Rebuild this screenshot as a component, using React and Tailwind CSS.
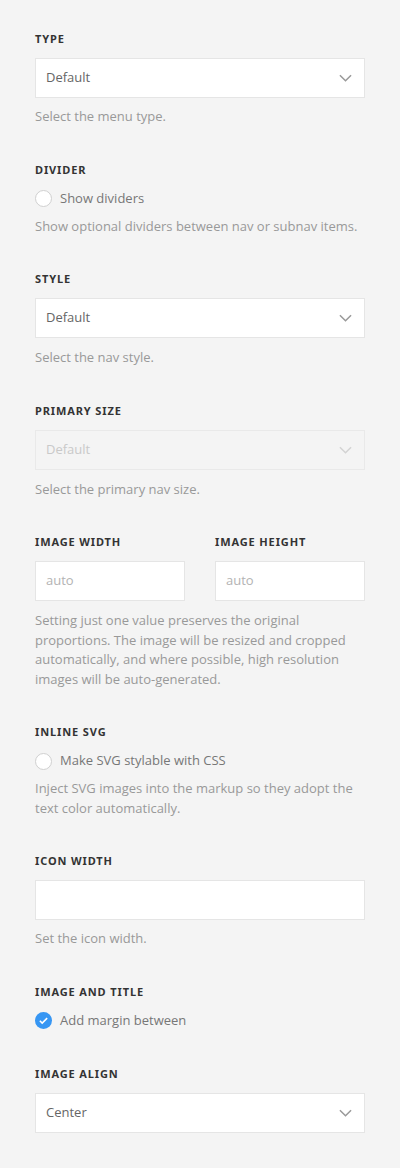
import { useState } from "react";

function Chevron({ className }) {
  return (
    <svg viewBox="0 0 14 8" className={className} fill="none">
      <path d="M1 1l6 6 6-6" stroke="currentColor" strokeWidth="1.6" />
    </svg>
  );
}

function Label({ children }) {
  return (
    <div
      className="h-5 leading-5 mb-[9px] text-[11px] font-bold uppercase tracking-[0.08em] text-[#333]"
      style={{ fontFamily: '"Noto Sans", "Open Sans", sans-serif' }}
    >
      {children}
    </div>
  );
}

function Help({ children, className = "" }) {
  return (
    <p className={`text-[13px] leading-[19.5px] text-[#999] ${className}`}>{children}</p>
  );
}

function Select({ value, disabled }) {
  return (
    <div
      className={`h-10 flex items-center justify-between pl-[10px] pr-[12px] border text-[13px] ${
        disabled
          ? "bg-[#f4f4f4] border-[#e9e9e9] text-[#c9c9c9]"
          : "bg-white border-[#e5e5e5] text-[#666]"
      }`}
    >
      <span>{value}</span>
      <Chevron className={`w-[13px] h-[8px] ${disabled ? "text-[#d3d3d3]" : "text-[#999]"}`} />
    </div>
  );
}

function TextInput({ placeholder = "" }) {
  return (
    <div className="h-10 flex items-center px-[10px] bg-white border border-[#e5e5e5] text-[13px] text-[#b3b3b3]">
      {placeholder}
    </div>
  );
}

function Radio({ label, checked }) {
  return (
    <div className="h-5 flex items-center gap-2 text-[13px] text-[#777]">
      {checked ? (
        <span className="w-[17px] h-[17px] rounded-full bg-[#3696f3] flex items-center justify-center">
          <svg viewBox="0 0 12 12" className="w-[11px] h-[11px]" fill="none">
            <path d="M2 6.2l2.6 2.6L10 3.4" stroke="white" strokeWidth="1.7" />
          </svg>
        </span>
      ) : (
        <span className="w-[17px] h-[17px] rounded-full bg-white border border-[#d0d0d0]" />
      )}
      <span>{label}</span>
    </div>
  );
}

export default function App() {
  const [marginOn] = useState(true);
  return (
    <div
      className="min-h-[1168px] bg-[#f4f4f4] px-[35px] pt-[29px] pb-10 flex flex-col gap-[33px]"
      style={{ fontFamily: '"Open Sans", sans-serif' }}
    >
      {/* Type */}
      <div>
        <Label>Type</Label>
        <Select value="Default" />
        <Help className="mt-[9px]">Select the menu type.</Help>
      </div>

      {/* Divider */}
      <div>
        <Label>Divider</Label>
        <Radio label="Show dividers" />
        <Help className="mt-[8px]">Show optional dividers between nav or subnav items.</Help>
      </div>

      {/* Style */}
      <div>
        <Label>Style</Label>
        <Select value="Default" />
        <Help className="mt-[10px]">Select the nav style.</Help>
      </div>

      {/* Primary size */}
      <div>
        <Label>Primary size</Label>
        <Select value="Default" disabled />
        <Help className="mt-[10px]">Select the primary nav size.</Help>
      </div>

      {/* Image width / height */}
      <div>
        <div className="grid grid-cols-2 gap-[30px]">
          <div>
            <Label>Image width</Label>
            <TextInput placeholder="auto" />
          </div>
          <div>
            <Label>Image height</Label>
            <TextInput placeholder="auto" />
          </div>
        </div>
        <Help className="mt-[10px]">
          Setting just one value preserves the original proportions. The image will be resized and
          cropped automatically, and where possible, high resolution images will be auto-generated.
        </Help>
      </div>

      {/* Inline SVG */}
      <div>
        <Label>Inline SVG</Label>
        <Radio label="Make SVG stylable with CSS" />
        <Help className="mt-[8px]">
          Inject SVG images into the markup so they adopt the text color automatically.
        </Help>
      </div>

      {/* Icon width */}
      <div>
        <Label>Icon width</Label>
        <TextInput />
        <Help className="mt-[9px]">Set the icon width.</Help>
      </div>

      {/* Image and title */}
      <div>
        <Label>Image and title</Label>
        <Radio label="Add margin between" checked={marginOn} />
      </div>

      {/* Image align */}
      <div>
        <Label>Image align</Label>
        <Select value="Center" />
      </div>
    </div>
  );
}
